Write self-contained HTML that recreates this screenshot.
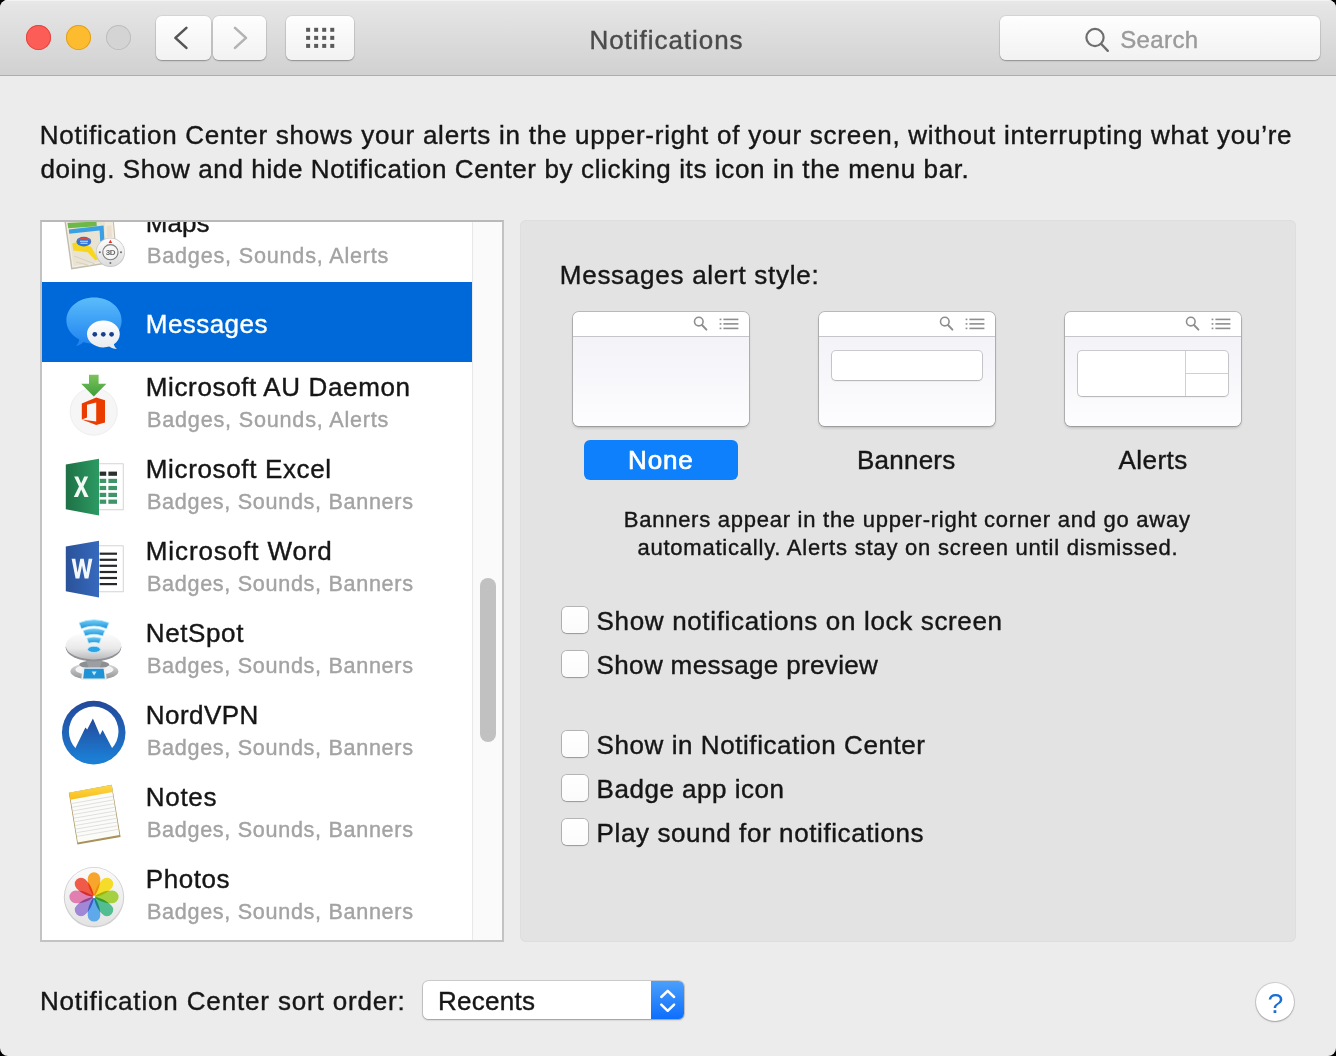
<!DOCTYPE html>
<html>
<head>
<meta charset="utf-8">
<title>Notifications</title>
<style>
*{box-sizing:border-box;margin:0;padding:0}
html,body{width:1336px;height:1056px;background:#000;overflow:hidden}
body{font-family:"Liberation Sans",sans-serif;color:#161616}
#win{position:absolute;left:0;top:0;width:1336px;height:1056px;background:#ececec;border-radius:8px;overflow:hidden}
#tb{position:absolute;left:0;top:0;width:1336px;height:76px;background:linear-gradient(#e9e9e9 0,#e5e5e5 8%,#d1d1d1 100%);border-bottom:1px solid #adadad;box-shadow:inset 0 1px 0 #f3f3f3}
.tl{position:absolute;top:25px;width:25px;height:25px;border-radius:50%}
.btn{position:absolute;top:16px;height:44px;background:linear-gradient(#fefefe,#f2f2f2);border-radius:6px;box-shadow:0 1px 1.5px rgba(0,0,0,.30),0 0 0 1px rgba(0,0,0,.05)}
.abs{position:absolute;white-space:pre;-webkit-text-stroke:0.4px}
svg{position:absolute;overflow:visible}
#list{position:absolute;left:40px;top:220px;width:464px;height:722px;background:#fff;border:2px solid #c3c3c3;border-top-color:#b9b9b9}
#track{position:absolute;left:430px;top:0;width:30px;height:718px;background:#fafafa;border-left:1px solid #e8e8e8}
#thumb{position:absolute;left:438px;top:355.5px;width:16px;height:164.5px;border-radius:8px;background:#c1c1c1}
#sel{position:absolute;left:0;top:60px;width:430px;height:80px;background:#0069d9}
#panel{position:absolute;left:520px;top:220px;width:776px;height:722px;background:#e3e3e3;border-radius:6px;box-shadow:inset 0 0 0 1px #dedede}
.th{position:absolute;top:312px;width:176px;height:114px;border-radius:6px;background:linear-gradient(#fff 0,#fff 24px,#f3f3f8 25px,#fdfdff 100%);box-shadow:0 0 0 1px rgba(0,0,0,.18),0 2px 3px rgba(0,0,0,.18)}
.th i{position:absolute;left:0;top:24px;width:176px;height:1px;background:#c6c6c9}
.cb{position:absolute;left:561.5px;width:26px;height:26px;border-radius:5px;background:linear-gradient(#fff,#fbfbfb);box-shadow:0 0 0 1px rgba(0,0,0,.20),0 1px 1.5px rgba(0,0,0,.16)}
</style>
</head>
<body>
<div id="win">
<div id="tb">
<div class="tl" style="left:25.5px;background:#fc5d57;box-shadow:inset 0 0 0 1px #df4740"></div>
<div class="tl" style="left:65.5px;background:#fdbc2f;box-shadow:inset 0 0 0 1px #dea023"></div>
<div class="tl" style="left:105.5px;background:#d4d4d4;box-shadow:inset 0 0 0 1px #bdbdbd"></div>
<div class="btn" style="left:156px;width:55px"></div>
<div class="btn" style="left:213px;width:53px"></div>
<div class="btn" style="left:286px;width:68px"></div>
<div class="btn" style="left:1000px;width:320px"></div>
<svg style="left:0;top:0" width="1336" height="76" viewBox="0 0 1336 76"><path d="M186.4 27.9 L175.4 37.9 L186.4 47.9" fill="none" stroke="#555" stroke-width="2.6" stroke-linecap="round" stroke-linejoin="round"/><path d="M235 27.9 L246 37.9 L235 47.9" fill="none" stroke="#b3b3b3" stroke-width="2.6" stroke-linecap="round" stroke-linejoin="round"/><rect x="306.10" y="27.80" width="4" height="4" fill="#5a5a5a"/><rect x="314.15" y="27.80" width="4" height="4" fill="#5a5a5a"/><rect x="322.20" y="27.80" width="4" height="4" fill="#5a5a5a"/><rect x="330.25" y="27.80" width="4" height="4" fill="#5a5a5a"/><rect x="306.10" y="35.85" width="4" height="4" fill="#5a5a5a"/><rect x="314.15" y="35.85" width="4" height="4" fill="#5a5a5a"/><rect x="322.20" y="35.85" width="4" height="4" fill="#5a5a5a"/><rect x="330.25" y="35.85" width="4" height="4" fill="#5a5a5a"/><rect x="306.10" y="43.90" width="4" height="4" fill="#5a5a5a"/><rect x="314.15" y="43.90" width="4" height="4" fill="#5a5a5a"/><rect x="322.20" y="43.90" width="4" height="4" fill="#5a5a5a"/><rect x="330.25" y="43.90" width="4" height="4" fill="#5a5a5a"/><circle cx="1095" cy="37.5" r="8.6" fill="none" stroke="#6e6e6e" stroke-width="2.2"/><path d="M1101.3 44 L1107.8 50.8" stroke="#6e6e6e" stroke-width="2.4" stroke-linecap="round"/></svg>
<div class="abs" style="left:589.40px;top:25.49px;font-size:26px;line-height:31px;color:#4b4b4b;letter-spacing:0.965px;">Notifications</div>
<div class="abs" style="left:1120.20px;top:25.28px;font-size:24px;line-height:29px;color:#9a9a9a;letter-spacing:0.381px;">Search</div>
</div>
<div class="abs" style="left:0;top:0"></div>
<div class="abs" style="left:39.70px;top:119.69px;font-size:26px;line-height:31px;color:#161616;letter-spacing:0.754px;">Notification Center shows your alerts in the upper-right of your screen, without interrupting what you’re</div>
<div class="abs" style="left:40.40px;top:153.59px;font-size:26px;line-height:31px;color:#161616;letter-spacing:0.627px;">doing. Show and hide Notification Center by clicking its icon in the menu bar.</div>
<div id="list"><div style="position:absolute;left:0;top:0;width:460px;height:718px;overflow:hidden">
<div id="sel"></div>
<div class="abs" style="left:103.80px;top:-14.01px;font-size:26px;line-height:31px;color:#161616;">Maps</div>
<div class="abs" style="left:105.00px;top:21.42px;font-size:21.6px;line-height:26px;color:#a3a3a3;letter-spacing:0.806px;">Badges, Sounds, Alerts</div>
<div class="abs" style="left:103.80px;top:87.29px;font-size:26px;line-height:31px;color:#fff;letter-spacing:0.443px;">Messages</div>
<div class="abs" style="left:103.80px;top:149.99px;font-size:26px;line-height:31px;color:#161616;letter-spacing:0.631px;">Microsoft AU Daemon</div>
<div class="abs" style="left:105.00px;top:185.42px;font-size:21.6px;line-height:26px;color:#a3a3a3;letter-spacing:0.806px;">Badges, Sounds, Alerts</div>
<div class="abs" style="left:103.80px;top:231.99px;font-size:26px;line-height:31px;color:#161616;letter-spacing:0.644px;">Microsoft Excel</div>
<div class="abs" style="left:105.00px;top:267.42px;font-size:21.6px;line-height:26px;color:#a3a3a3;letter-spacing:0.686px;">Badges, Sounds, Banners</div>
<div class="abs" style="left:103.80px;top:313.99px;font-size:26px;line-height:31px;color:#161616;letter-spacing:0.894px;">Microsoft Word</div>
<div class="abs" style="left:105.00px;top:349.42px;font-size:21.6px;line-height:26px;color:#a3a3a3;letter-spacing:0.686px;">Badges, Sounds, Banners</div>
<div class="abs" style="left:103.80px;top:395.99px;font-size:26px;line-height:31px;color:#161616;letter-spacing:0.613px;">NetSpot</div>
<div class="abs" style="left:105.00px;top:431.42px;font-size:21.6px;line-height:26px;color:#a3a3a3;letter-spacing:0.686px;">Badges, Sounds, Banners</div>
<div class="abs" style="left:103.80px;top:477.99px;font-size:26px;line-height:31px;color:#161616;letter-spacing:0.444px;">NordVPN</div>
<div class="abs" style="left:105.00px;top:513.42px;font-size:21.6px;line-height:26px;color:#a3a3a3;letter-spacing:0.686px;">Badges, Sounds, Banners</div>
<div class="abs" style="left:103.80px;top:559.99px;font-size:26px;line-height:31px;color:#161616;letter-spacing:0.695px;">Notes</div>
<div class="abs" style="left:105.00px;top:595.42px;font-size:21.6px;line-height:26px;color:#a3a3a3;letter-spacing:0.686px;">Badges, Sounds, Banners</div>
<div class="abs" style="left:103.80px;top:641.99px;font-size:26px;line-height:31px;color:#161616;letter-spacing:0.531px;">Photos</div>
<div class="abs" style="left:105.00px;top:677.42px;font-size:21.6px;line-height:26px;color:#a3a3a3;letter-spacing:0.686px;">Badges, Sounds, Banners</div>
<svg style="left:-42px;top:-222px" width="504" height="942" viewBox="0 0 504 942"><g><defs><linearGradient id="cmp" x1="0" y1="0" x2="0" y2="1"><stop offset="0" stop-color="#fdfdfd"/><stop offset="1" stop-color="#dcdcdc"/></linearGradient></defs><path d="M63.4 214 L113 211 L117.4 262 L71.2 269.6 Z" fill="#c2bcad"/><path d="M64.8 214 L112 211.5 L116.2 260.8 L72.4 267.8 Z" fill="#f3eee2"/><path d="M66.4 214 L110.6 212 L114.6 259.8 L73.4 266.2 Z" fill="#e9e3d3"/><path d="M67.5 223 L96.5 221.5 L96.8 226.3 L68.2 228.2 Z" fill="#6cb848"/><path d="M68.8 229.6 L103.6 225.6 L104.4 241 L100.2 241.5 L99.6 230.4 L69.3 233.8 Z" fill="#3aa0e4"/><path d="M104.8 222 L112.4 221.4 L113.8 240 L105.6 241 Z" fill="#f1ecdc"/><path d="M106.5 226 L111.4 225.6 L112 237 L107 237.6 Z" fill="#ecdfcf"/><path d="M72.2 243.4 L77 242 L91.4 247 L98 259 L95.6 260.6 L87.6 252.2 L73.4 250.4 Z" fill="#f8d61f"/><ellipse cx="83.8" cy="241.6" rx="7.4" ry="4.9" fill="#2f74d8"/><path d="M77 239.4 Q84 236.2 91 239.4 L90.6 240.6 Q84 238 77.4 240.6 Z" fill="#e24a3c"/><path d="M80 241.3 h8 M80.5 243.3 h7" stroke="#cfe0f8" stroke-width="1.1"/><path d="M74 256 L95 264 M76 262 L90 265.6" stroke="#d8d1bf" stroke-width="1"/><circle cx="110.4" cy="252.4" r="14.6" fill="#c9c9c9"/><circle cx="110.4" cy="252.2" r="13.8" fill="url(#cmp)"/><circle cx="110.4" cy="252.2" r="7.6" fill="#f6f6f6" stroke="#7d7d7d" stroke-width="1.1"/><text x="110.4" y="255.2" font-family="Liberation Sans" font-size="8" font-weight="700" fill="#6a6a6a" text-anchor="middle" letter-spacing="-0.4">3D</text><path d="M110.4 239.8 L112.2 243 L108.6 243 Z" fill="#e0352b"/><circle cx="99.8" cy="252.3" r="1" fill="#6d6d6d"/><circle cx="121" cy="252.3" r="1" fill="#6d6d6d"/><circle cx="110.4" cy="263" r="1" fill="#6d6d6d"/></g><g><defs><linearGradient id="msg" x1="0" y1="0" x2="0" y2="1"><stop offset="0" stop-color="#5bbcfb"/><stop offset="1" stop-color="#1e82f0"/></linearGradient><linearGradient id="msgw" x1="0" y1="0" x2="0" y2="1"><stop offset="0" stop-color="#ffffff"/><stop offset="1" stop-color="#e6e9ee"/></linearGradient></defs><path d="M94 297.6 C109.5 297.6 121.6 307.6 121.6 320.6 C121.6 333.8 109.5 343.8 94 343.8 C90.2 343.8 86.6 343.2 83.4 342.1 C81.6 344.2 79 345.6 76 345.9 C78 344 79.2 341.6 79.3 339.6 C71.4 335.6 66.4 328.6 66.4 320.6 C66.4 307.6 78.6 297.6 94 297.6 Z" fill="url(#msg)"/><path d="M103.4 320.6 C112.6 320.6 119.8 326.6 119.8 334 C119.8 338.2 117.5 341.9 113.9 344.3 C114.2 346 115.2 347.8 117 349 C113.8 349 111.2 347.9 109.4 346.6 C107.5 347.1 105.5 347.4 103.4 347.4 C94.2 347.4 87 341.4 87 334 C87 326.6 94.2 320.6 103.4 320.6 Z" fill="url(#msgw)"/><circle cx="94.8" cy="334.3" r="2.35" fill="#14408c"/><circle cx="103.3" cy="334.3" r="2.35" fill="#14408c"/><circle cx="111.6" cy="334.3" r="2.35" fill="#14408c"/></g><g><defs><linearGradient id="grn" x1="0" y1="0" x2="0" y2="1"><stop offset="0" stop-color="#7cc35c"/><stop offset="1" stop-color="#3f9e3b"/></linearGradient></defs><circle cx="93.7" cy="411.6" r="24" fill="#f6f6f6"/><circle cx="93.7" cy="411.6" r="23.5" fill="none" stroke="#efefef" stroke-width="1"/><path d="M89 374.8 L98.6 374.8 L98.6 383.8 L106.4 383.8 L93.8 396.4 L81.2 383.8 L89 383.8 Z" fill="url(#grn)"/><path d="M81.8 403.4 L96.2 397.6 L105 400.2 L105 422.4 L96.2 425 L81.8 419.6 L96.2 421.4 L96.2 402.6 L87 404.8 L87 417.6 L81.8 419.6 Z" fill="#eb3c00"/></g><g><defs><linearGradient id="odX" x1="0" y1="0" x2="1" y2="0"><stop offset="0" stop-color="#1e7145"/><stop offset="1" stop-color="#2c9a63"/></linearGradient></defs><rect x="98" y="463.4" width="25.6" height="46.8" fill="#c9c9c9"/><rect x="98" y="464.2" width="24.8" height="45.2" fill="#ffffff"/><rect x="99.6" y="471.6" width="6.6" height="4.2" fill="#2b2f2d"/><rect x="108.4" y="471.6" width="8.6" height="4.2" fill="#2b2f2d"/><rect x="99.6" y="478.8" width="6.6" height="4.2" fill="#3f9468"/><rect x="108.4" y="478.8" width="8.6" height="4.2" fill="#3f9468"/><rect x="99.6" y="485.9" width="6.6" height="4.2" fill="#3f9468"/><rect x="108.4" y="485.9" width="8.6" height="4.2" fill="#3f9468"/><rect x="99.6" y="492.8" width="6.6" height="4.2" fill="#3f9468"/><rect x="108.4" y="492.8" width="8.6" height="4.2" fill="#3f9468"/><rect x="99.6" y="499.6" width="6.6" height="4.2" fill="#3f9468"/><rect x="108.4" y="499.6" width="8.6" height="4.2" fill="#3f9468"/><path d="M65.8 464.6 L99 458.8 L99 515.6 L65.8 509.2 Z" fill="url(#odX)"/><path d="M74.2 476.4 L78.2 476.4 L81.2 483.4 L84.2 476.4 L88.2 476.4 L83.4 486.4 L88.6 497 L84.4 497 L81.2 489.6 L78 497 L73.8 497 L79 486.4 Z" fill="#f2faf5"/></g><g><defs><linearGradient id="odW" x1="0" y1="0" x2="1" y2="0"><stop offset="0" stop-color="#2a5299"/><stop offset="1" stop-color="#3669bd"/></linearGradient></defs><rect x="98" y="545.4" width="25.6" height="46.8" fill="#c9c9c9"/><rect x="98" y="546.2" width="24.8" height="45.2" fill="#ffffff"/><rect x="99.6" y="552.6" width="17.4" height="2.2" fill="#26282b"/><rect x="99.6" y="558.7" width="17.4" height="2.2" fill="#26282b"/><rect x="99.6" y="564.7" width="17.4" height="2.2" fill="#26282b"/><rect x="99.6" y="570.9" width="17.4" height="2.2" fill="#26282b"/><rect x="99.6" y="576.9" width="17.4" height="2.2" fill="#26282b"/><rect x="99.6" y="583.0" width="17.4" height="2.2" fill="#26282b"/><path d="M65.8 546.6 L99 540.8 L99 597.6 L65.8 591.2 Z" fill="url(#odW)"/><path d="M71.6 558.8 L75.3 558.8 L77.6 572.4 L80.3 558.8 L83.7 558.8 L86.4 572.4 L88.7 558.8 L92.4 558.8 L88.4 578.6 L84.6 578.6 L82 565.6 L79.4 578.6 L75.6 578.6 Z" fill="#f3f6fb"/></g><g><defs><linearGradient id="ns1" x1="0" y1="0" x2="0" y2="1"><stop offset="0" stop-color="#ffffff"/><stop offset="0.6" stop-color="#e9e9ea"/><stop offset="1" stop-color="#b9babc"/></linearGradient><linearGradient id="ns2" x1="0" y1="0" x2="0" y2="1"><stop offset="0" stop-color="#6fd0f7"/><stop offset="1" stop-color="#1f8fd6"/></linearGradient><linearGradient id="ns3" x1="0" y1="0" x2="0" y2="1"><stop offset="0" stop-color="#dedfe0"/><stop offset="1" stop-color="#8e9093"/></linearGradient></defs><ellipse cx="94.4" cy="671.4" rx="24" ry="8.6" fill="url(#ns3)"/><ellipse cx="94.4" cy="669.6" rx="19" ry="5.6" fill="#f4f4f5"/><ellipse cx="94.2" cy="664.6" rx="15" ry="4.2" fill="#8d8f92"/><path d="M86 660 L102.4 660 L99.4 669 L89 669 Z" fill="#9c9ea1"/><ellipse cx="93.5" cy="647.2" rx="27.8" ry="14.2" fill="#8f9194"/><ellipse cx="93.5" cy="645.6" rx="27.8" ry="13.8" fill="url(#ns1)"/><path d="M79.0 622.8 A39.2 39.2 0 0 1 109.0 622.8 L106.6 628.7 A32.8 32.8 0 0 0 81.4 628.7 Z" fill="url(#ns2)" stroke="#bfeaff" stroke-width="0.8"/><path d="M83.1 630.6 A30.4 30.4 0 0 1 104.9 630.6 L102.8 636.0 A24.6 24.6 0 0 0 85.2 636.0 Z" fill="url(#ns2)" stroke="#bfeaff" stroke-width="0.8"/><path d="M86.8 638.2 A22.0 22.0 0 0 1 101.2 638.2 L99.4 643.3 A16.6 16.6 0 0 0 88.6 643.3 Z" fill="url(#ns2)" stroke="#bfeaff" stroke-width="0.8"/><ellipse cx="94" cy="649.4" rx="6.4" ry="3.1" fill="#27a3e6" stroke="#bfeaff" stroke-width="0.8"/><path d="M82.6 667.4 L105.4 667.4 L106.8 680 L81.2 680 Z" fill="#eceded"/><path d="M84.4 668.8 L103.6 668.8 L104.8 678.6 L83.2 678.6 Z" fill="#1f93d6"/><path d="M91.6 671.4 L96.6 671.4 L94.1 675.6 Z" fill="#bfeaff"/></g><g><defs><linearGradient id="nv" x1="0" y1="0" x2="0" y2="1"><stop offset="0" stop-color="#24489a"/><stop offset="1" stop-color="#1b80d6"/></linearGradient><clipPath id="nvc"><circle cx="93.7" cy="732.6" r="31.6"/></clipPath></defs><circle cx="93.7" cy="732.6" r="31.8" fill="url(#nv)"/><circle cx="93.7" cy="731.4" r="24.8" fill="#ffffff"/><g clip-path="url(#nvc)"><path d="M73 753 L85.4 727.6 L87.2 729.4 L92.9 718.4 L100 735 L102.6 730 L113.6 751 L112 760 L76 760 Z" fill="url(#nv)"/></g></g><g><defs><linearGradient id="ny" x1="0" y1="0" x2="0" y2="1"><stop offset="0" stop-color="#fdd94a"/><stop offset="1" stop-color="#f7bd18"/></linearGradient></defs><path d="M68.8 792.8 L111.8 784.8 L120.6 837 L77.4 844.6 Z" fill="#a8925a"/><path d="M69.6 793 L111.4 785.4 L119.4 835 L77.8 842.4 Z" fill="#fbfbf8"/><path d="M71.4 803.6 L113.0 796.3" stroke="#dcdcdc" stroke-width="0.9"/><path d="M72.0 807.3 L113.6 799.9" stroke="#dcdcdc" stroke-width="0.9"/><path d="M72.7 810.9 L114.3 803.6" stroke="#dcdcdc" stroke-width="0.9"/><path d="M73.3 814.5 L114.9 807.3" stroke="#dcdcdc" stroke-width="0.9"/><path d="M73.9 818.2 L115.5 811.0" stroke="#dcdcdc" stroke-width="0.9"/><path d="M74.5 821.8 L116.1 814.6" stroke="#dcdcdc" stroke-width="0.9"/><path d="M75.1 825.5 L116.7 818.3" stroke="#dcdcdc" stroke-width="0.9"/><path d="M75.7 829.1 L117.3 822.0" stroke="#dcdcdc" stroke-width="0.9"/><path d="M76.4 832.7 L118.0 825.7" stroke="#dcdcdc" stroke-width="0.9"/><path d="M77.0 836.4 L118.6 829.3" stroke="#dcdcdc" stroke-width="0.9"/><path d="M69.2 792.8 L111.6 785 L112.8 792 L70.4 799.8 Z" fill="url(#ny)"/></g><g><defs><linearGradient id="ph" x1="0" y1="0" x2="0" y2="1"><stop offset="0" stop-color="#fbfbfb"/><stop offset="1" stop-color="#e3e3e3"/></linearGradient></defs><circle cx="94" cy="897.3" r="30.2" fill="#cfcfcf"/><circle cx="94" cy="896.9" r="29.2" fill="url(#ph)"/><g style="isolation:isolate"><path d="M94 897.5 C91.4 892.9 87.7 887.9 87.7 878.6 A6.3 6.3 0 0 1 100.3 878.6 C100.3 887.9 96.6 892.9 94 897.5 Z" fill="#f7a52c" transform="rotate(0 94 896.9)" style="mix-blend-mode:multiply"/><path d="M94 897.5 C91.4 892.9 87.7 887.9 87.7 878.6 A6.3 6.3 0 0 1 100.3 878.6 C100.3 887.9 96.6 892.9 94 897.5 Z" fill="#f5dc2a" transform="rotate(45 94 896.9)" style="mix-blend-mode:multiply"/><path d="M94 897.5 C91.4 892.9 87.7 887.9 87.7 878.6 A6.3 6.3 0 0 1 100.3 878.6 C100.3 887.9 96.6 892.9 94 897.5 Z" fill="#a5d140" transform="rotate(90 94 896.9)" style="mix-blend-mode:multiply"/><path d="M94 897.5 C91.4 892.9 87.7 887.9 87.7 878.6 A6.3 6.3 0 0 1 100.3 878.6 C100.3 887.9 96.6 892.9 94 897.5 Z" fill="#52bd90" transform="rotate(135 94 896.9)" style="mix-blend-mode:multiply"/><path d="M94 897.5 C91.4 892.9 87.7 887.9 87.7 878.6 A6.3 6.3 0 0 1 100.3 878.6 C100.3 887.9 96.6 892.9 94 897.5 Z" fill="#5ea9ea" transform="rotate(180 94 896.9)" style="mix-blend-mode:multiply"/><path d="M94 897.5 C91.4 892.9 87.7 887.9 87.7 878.6 A6.3 6.3 0 0 1 100.3 878.6 C100.3 887.9 96.6 892.9 94 897.5 Z" fill="#a088d6" transform="rotate(225 94 896.9)" style="mix-blend-mode:multiply"/><path d="M94 897.5 C91.4 892.9 87.7 887.9 87.7 878.6 A6.3 6.3 0 0 1 100.3 878.6 C100.3 887.9 96.6 892.9 94 897.5 Z" fill="#e07fb0" transform="rotate(270 94 896.9)" style="mix-blend-mode:multiply"/><path d="M94 897.5 C91.4 892.9 87.7 887.9 87.7 878.6 A6.3 6.3 0 0 1 100.3 878.6 C100.3 887.9 96.6 892.9 94 897.5 Z" fill="#f05a48" transform="rotate(315 94 896.9)" style="mix-blend-mode:multiply"/></g><circle cx="94" cy="896.9" r="1.3" fill="#fff"/></g></svg>
<div id="track"></div><div id="thumb"></div>
</div></div>
<div id="panel"></div>
<div class="abs" style="left:559.80px;top:259.79px;font-size:26px;line-height:31px;color:#161616;letter-spacing:0.736px;">Messages alert style:</div>
<div class="th" style="left:573px"><i></i></div>
<div class="th" style="left:819px"><i></i></div>
<div class="th" style="left:1065px"><i></i></div>
<svg style="left:0;top:0" width="1336" height="1056" viewBox="0 0 1336 1056"><circle cx="698.8" cy="321.6" r="4.3" fill="none" stroke="#8e8e8e" stroke-width="1.6"/><path d="M702.0 325.0 L706.4 329.6" stroke="#8e8e8e" stroke-width="2" stroke-linecap="round"/><rect x="719.6" y="318.59999999999997" width="1.8" height="1.6" fill="#8e8e8e"/><rect x="723.4" y="318.59999999999997" width="15" height="1.6" fill="#8e8e8e"/><rect x="719.6" y="323.09999999999997" width="1.8" height="1.6" fill="#8e8e8e"/><rect x="723.4" y="323.09999999999997" width="15" height="1.6" fill="#8e8e8e"/><rect x="719.6" y="327.59999999999997" width="1.8" height="1.6" fill="#8e8e8e"/><rect x="723.4" y="327.59999999999997" width="15" height="1.6" fill="#8e8e8e"/><circle cx="944.8" cy="321.6" r="4.3" fill="none" stroke="#8e8e8e" stroke-width="1.6"/><path d="M948.0 325.0 L952.4 329.6" stroke="#8e8e8e" stroke-width="2" stroke-linecap="round"/><rect x="965.6" y="318.59999999999997" width="1.8" height="1.6" fill="#8e8e8e"/><rect x="969.4" y="318.59999999999997" width="15" height="1.6" fill="#8e8e8e"/><rect x="965.6" y="323.09999999999997" width="1.8" height="1.6" fill="#8e8e8e"/><rect x="969.4" y="323.09999999999997" width="15" height="1.6" fill="#8e8e8e"/><rect x="965.6" y="327.59999999999997" width="1.8" height="1.6" fill="#8e8e8e"/><rect x="969.4" y="327.59999999999997" width="15" height="1.6" fill="#8e8e8e"/><circle cx="1190.8" cy="321.6" r="4.3" fill="none" stroke="#8e8e8e" stroke-width="1.6"/><path d="M1194.0 325.0 L1198.3999999999999 329.6" stroke="#8e8e8e" stroke-width="2" stroke-linecap="round"/><rect x="1211.6" y="318.59999999999997" width="1.8" height="1.6" fill="#8e8e8e"/><rect x="1215.4" y="318.59999999999997" width="15" height="1.6" fill="#8e8e8e"/><rect x="1211.6" y="323.09999999999997" width="1.8" height="1.6" fill="#8e8e8e"/><rect x="1215.4" y="323.09999999999997" width="15" height="1.6" fill="#8e8e8e"/><rect x="1211.6" y="327.59999999999997" width="1.8" height="1.6" fill="#8e8e8e"/><rect x="1215.4" y="327.59999999999997" width="15" height="1.6" fill="#8e8e8e"/></svg>
<div style="position:absolute;left:832px;top:351px;width:150px;height:29px;border-radius:4px;background:#fff;box-shadow:0 0 0 1px rgba(0,0,0,.17),0 1px 2px rgba(0,0,0,.14)"></div>
<div style="position:absolute;left:1078px;top:351px;width:150px;height:45px;border-radius:4px;background:#fff;box-shadow:0 0 0 1px rgba(0,0,0,.17),0 1px 2px rgba(0,0,0,.14)"><div style="position:absolute;left:107px;top:0;width:1px;height:45px;background:#d0d0d0"></div><div style="position:absolute;left:107px;top:22px;width:43px;height:1px;background:#d0d0d0"></div></div>
<div style="position:absolute;left:584px;top:440px;width:154px;height:40px;border-radius:6px;background:#0f80fb"></div>
<div class="abs" style="left:628.10px;top:444.69px;font-size:26px;line-height:31px;color:#fff;letter-spacing:0.801px;-webkit-text-stroke:0.7px;">None</div>
<div class="abs" style="left:857.00px;top:444.69px;font-size:26px;line-height:31px;color:#161616;letter-spacing:0.227px;">Banners</div>
<div class="abs" style="left:1118.40px;top:444.69px;font-size:26px;line-height:31px;color:#161616;letter-spacing:0.488px;">Alerts</div>
<div class="abs" style="left:623.80px;top:507.18px;font-size:22px;line-height:26px;color:#161616;letter-spacing:0.741px;">Banners appear in the upper-right corner and go away</div>
<div class="abs" style="left:637.40px;top:535.18px;font-size:22px;line-height:26px;color:#161616;letter-spacing:0.781px;">automatically. Alerts stay on screen until dismissed.</div>
<div class="cb" style="top:607.0px"></div>
<div class="abs" style="left:596.60px;top:605.79px;font-size:26px;line-height:31px;color:#161616;letter-spacing:0.657px;">Show notifications on lock screen</div>
<div class="cb" style="top:650.8px"></div>
<div class="abs" style="left:596.60px;top:649.59px;font-size:26px;line-height:31px;color:#161616;letter-spacing:0.353px;">Show message preview</div>
<div class="cb" style="top:730.8px"></div>
<div class="abs" style="left:596.60px;top:729.59px;font-size:26px;line-height:31px;color:#161616;letter-spacing:0.568px;">Show in Notification Center</div>
<div class="cb" style="top:774.8px"></div>
<div class="abs" style="left:596.60px;top:773.59px;font-size:26px;line-height:31px;color:#161616;letter-spacing:0.520px;">Badge app icon</div>
<div class="cb" style="top:818.8px"></div>
<div class="abs" style="left:596.60px;top:817.59px;font-size:26px;line-height:31px;color:#161616;letter-spacing:0.603px;">Play sound for notifications</div>
<div class="abs" style="left:39.90px;top:985.79px;font-size:26px;line-height:31px;color:#161616;letter-spacing:0.845px;">Notification Center sort order:</div>
<div style="position:absolute;left:422.5px;top:981px;width:261px;height:38px;border-radius:5.5px;background:#fff;box-shadow:0 0 0 1px rgba(0,0,0,.13),0 1px 2px rgba(0,0,0,.25);overflow:hidden"><div style="position:absolute;right:0;top:0;width:33px;height:38px;background:linear-gradient(#4ba0fb,#0d6efb)"></div></div>
<svg style="left:0;top:0" width="1336" height="1056" viewBox="0 0 1336 1056"><path d="M661.3 997 L667.7 990.8 L674.1 997 M661.3 1004.6 L667.7 1010.8 L674.1 1004.6" fill="none" stroke="#fff" stroke-width="2.5" stroke-linecap="round" stroke-linejoin="round"/></svg>
<div class="abs" style="left:438.00px;top:985.59px;font-size:26px;line-height:31px;color:#161616;letter-spacing:0.270px;">Recents</div>
<div style="position:absolute;left:1256px;top:983px;width:38px;height:38px;border-radius:50%;background:#fff;box-shadow:0 0 0 1px rgba(0,0,0,.12),0 1px 2px rgba(0,0,0,.22)"></div>
<div class="abs" style="left:1267.40px;top:985.62px;font-size:28.5px;line-height:34px;color:#1b6fd0;-webkit-text-stroke:0;">?</div>
</div>
</body>
</html>
